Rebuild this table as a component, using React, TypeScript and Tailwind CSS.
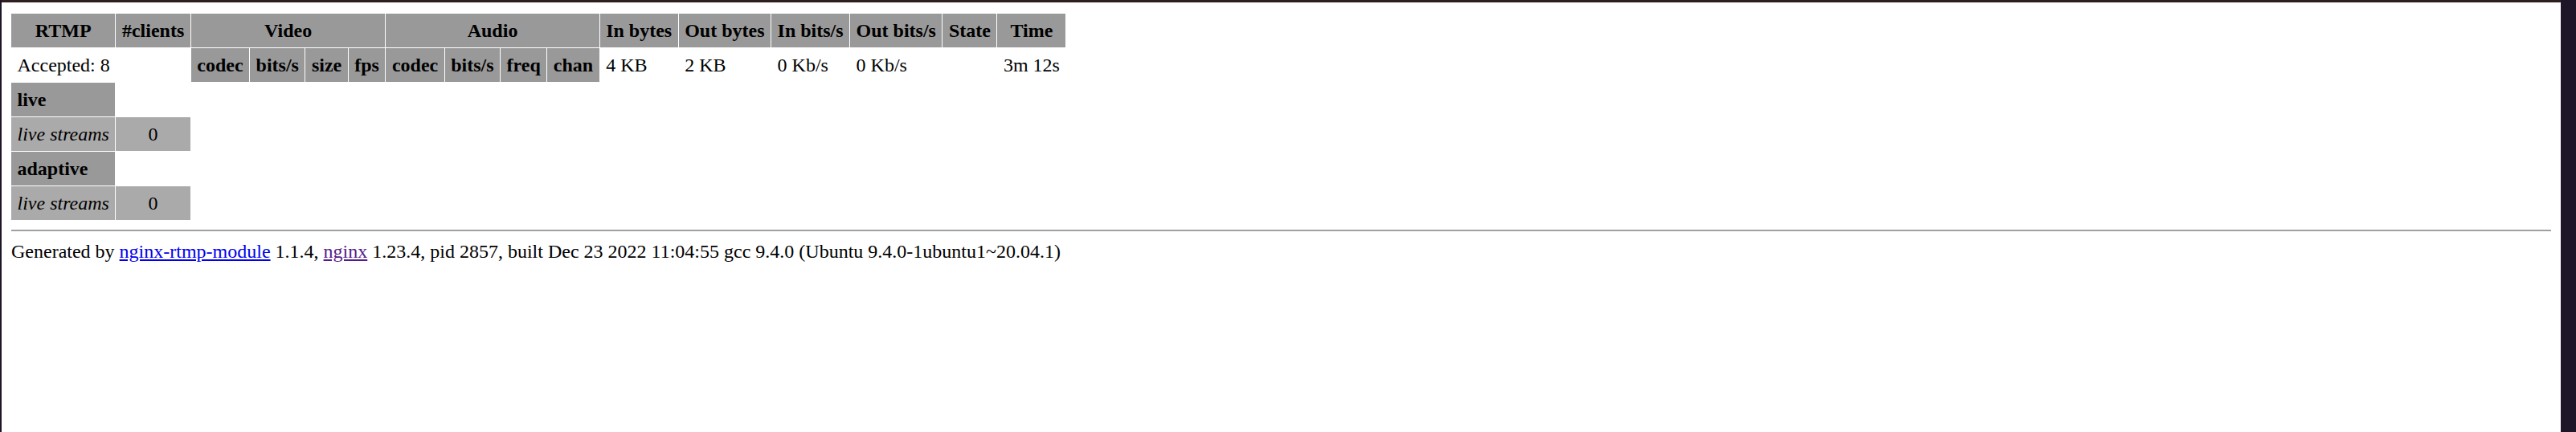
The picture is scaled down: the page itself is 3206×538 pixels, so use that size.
import React from "react";

const th = "bg-[#999999] px-[7.5px] py-[7px] font-bold text-center align-middle";
const td = "px-[7.5px] py-[7px] align-middle font-normal";

const videoCols = ["codec", "bits/s", "size", "fps"];
const audioCols = ["codec", "bits/s", "freq", "chan"];

const apps = [
  { name: "live", streams: 0 },
  { name: "adaptive", streams: 0 },
];

export default function App() {
  return (
    <div className="min-h-[538px] bg-[#1d1528] pl-[2px] pr-[19px]">
      <div className="h-[3px] bg-[#2a2224] border-b border-[#3a1414]" />
      <div
        className="min-h-[535px] bg-white p-[12px] text-[24px] leading-[28px] text-black"
        style={{ fontFamily: '"Liberation Serif", "Times New Roman", serif' }}
      >
        {/* Stats table */}
        <table className="border-separate border-spacing-[1px] mt-[1px] -ml-[1px]">
          <tbody>
            <tr>
              <th className={th}>RTMP</th>
              <th className={th}>#clients</th>
              <th className={th} colSpan={4}>Video</th>
              <th className={th} colSpan={4}>Audio</th>
              <th className={th}>In bytes</th>
              <th className={th}>Out bytes</th>
              <th className={th}>In bits/s</th>
              <th className={th}>Out bits/s</th>
              <th className={th}>State</th>
              <th className={th}>Time</th>
            </tr>
            <tr>
              <td className={td + " text-left"} colSpan={2}>Accepted: 8</td>
              {videoCols.map((c, i) => (
                <th key={"v" + i} className={th}>{c}</th>
              ))}
              {audioCols.map((c, i) => (
                <th key={"a" + i} className={th}>{c}</th>
              ))}
              <td className={td + " text-left"}>4 KB</td>
              <td className={td + " text-left"}>2 KB</td>
              <td className={td + " text-left"}>0 Kb/s</td>
              <td className={td + " text-left"}>0 Kb/s</td>
              <td className={td}></td>
              <td className={td + " text-left"}>3m 12s</td>
            </tr>
            {apps.map((app) => (
              <React.Fragment key={app.name}>
                <tr>
                  <td className={td + " text-left bg-[#999999]"}>
                    <b>{app.name}</b>
                  </td>
                </tr>
                <tr>
                  <td className={td + " text-left bg-[#aaaaaa]"}>
                    <i>live streams</i>
                  </td>
                  <td className={td + " text-center bg-[#aaaaaa]"}>{app.streams}</td>
                </tr>
              </React.Fragment>
            ))}
          </tbody>
        </table>

        <hr className="mt-[11px] mb-[11px] border-0 border-t-2 border-[#a0a0a0]" />

        <div>
          Generated by{" "}
          <a href="#" className="text-[#0000ee] underline">nginx-rtmp-module</a>{" "}
          1.1.4,{" "}
          <a href="#" className="text-[#551a8b] underline">nginx</a>{" "}
          1.23.4, pid 2857, built Dec 23 2022 11:04:55 gcc 9.4.0 (Ubuntu 9.4.0-1ubuntu1~20.04.1)
        </div>
      </div>
    </div>
  );
}
